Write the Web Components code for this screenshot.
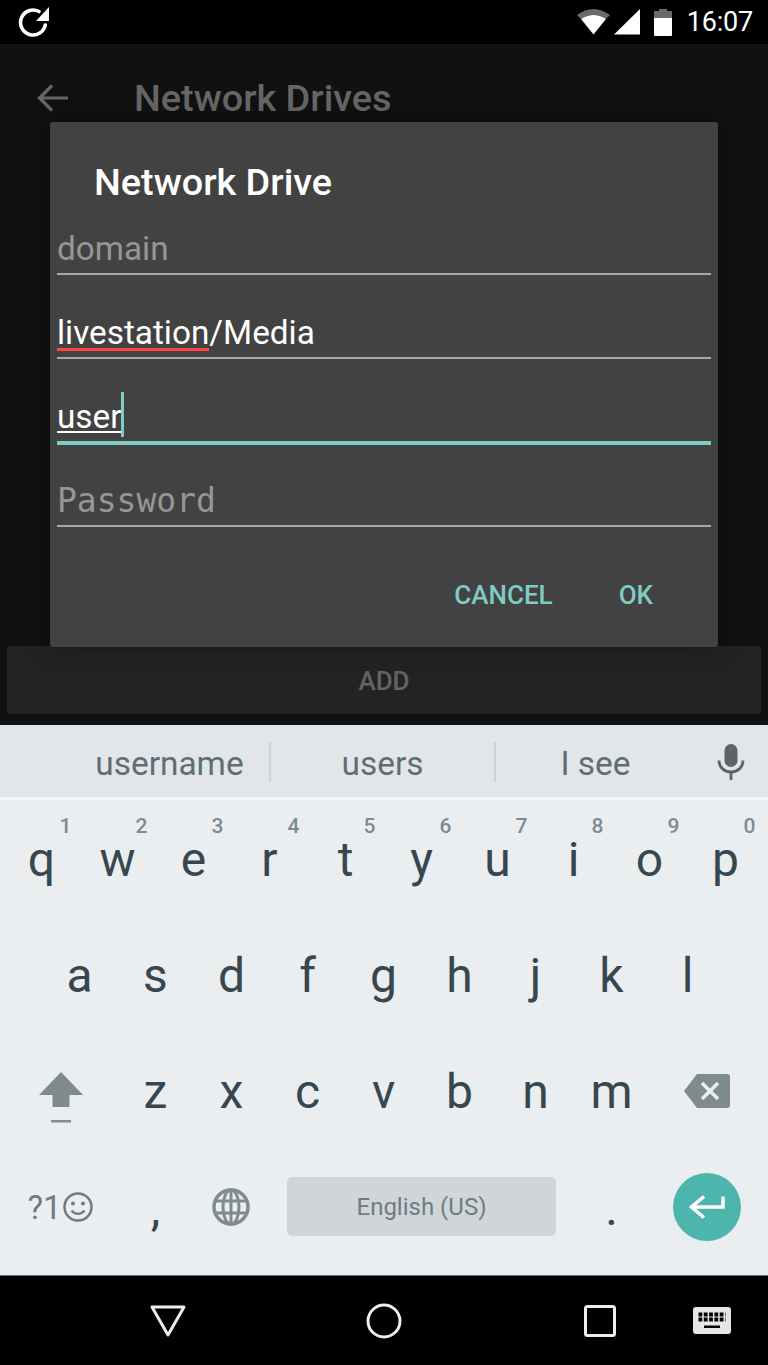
<!DOCTYPE html>
<html>
<head>
<meta charset="utf-8">
<title>Network Drive</title>
<style>
html,body{margin:0;padding:0;background:#000;}
body{width:768px;height:1365px;overflow:hidden;font-family:Roboto,"Liberation Sans",sans-serif;}
</style>
</head>
<body>
<phone-screen>
  <status-bar></status-bar>
  <drive-page></drive-page>
  <soft-keyboard></soft-keyboard>
  <nav-bar></nav-bar>
</phone-screen>

<script>
class PhoneScreen extends HTMLElement {
    constructor() {
        super();
        this.attachShadow({ mode: "open" });
        this.shadowRoot.innerHTML = `
        <style>
        :host{display:flex;flex-direction:column;width:768px;height:1365px;}
        </style>
        <slot></slot>
        `;
    }
}

class StatusBar extends HTMLElement {
    constructor() {
        super();
        this.attachShadow({ mode: "open" });
        this.shadowRoot.innerHTML = `
        <style>
        :host{display:flex;align-items:center;height:44px;background:#000;color:#fff;flex:none;}
        svg{display:block;flex:none;}
        .sync{margin-left:18px;}
        .right{margin-left:auto;display:flex;align-items:center;}
        .wifi{margin-right:4px;}
        .signal{margin-right:14px;}
        .battery{margin-right:15px;}
        .time{font:400 27px Roboto,sans-serif;margin-right:15px;letter-spacing:-.2px;}
        </style>
        <svg class="sync" width="32" height="36" viewBox="0 0 32 36">
            <path d="M21 7.500A12.500 12.500 0 1 0 27.300 21" fill="none" stroke="#fff" stroke-width="3.600" stroke-linecap="round"/>
            <path d="M18 17H31V3z" fill="#fff"/>
        </svg>
        <div class="right">
            <svg class="wifi" width="33" height="26" viewBox="0 0 33 26">
                <path d="M0 6Q16.500 -6 33 6L29 10Q16.500 2 4 10z" fill="#6a6a6a"/>
                <path d="M4 10Q16.500 2 29 10L16.500 25.500z" fill="#fff"/>
            </svg>
            <svg class="signal" width="26" height="26" viewBox="0 0 26 26"><path d="M0 25.500L26 0V25.500z" fill="#fff"/></svg>
            <svg class="battery" width="18" height="27" viewBox="0 0 18 27">
                <path d="M5 0h8v2h5v9H0V2h5z" fill="#6a6a6a"/>
                <path d="M0 9h18v17a1 1 0 0 1-1 1H1a1 1 0 0 1-1-1z" fill="#fff"/>
            </svg>
            <span class="time">16:07</span>
        </div>
        `;
    }
}

class DrivePage extends HTMLElement {
    constructor() {
        super();
        this.attachShadow({ mode: "open" });
        this.shadowRoot.innerHTML = `
        <style>
        :host{display:flex;flex-direction:column;position:relative;height:681px;background:#111;flex:none;}
        .toolbar{display:flex;align-items:center;height:108px;padding-left:37px;box-sizing:border-box;color:#666;}
        .toolbar svg{display:block;margin-right:65px;}
        .toolbar span{font:500 37.800px Roboto,sans-serif;}
        .add{margin:494px 7px 0;height:68px;padding-top:1px;box-sizing:border-box;background:#232323;border-radius:3px;display:flex;align-items:center;justify-content:center;
            font:500 26px Roboto,sans-serif;color:#636363;}
        network-dialog{position:absolute;left:50px;top:78px;}
        </style>
        <div class="toolbar">
            <svg width="32" height="32" viewBox="0 0 32 32"><path d="M31 16H3M15 3.500L2.500 16 15 28.500" fill="none" stroke="#666" stroke-width="3.200"/></svg>
            <span>Network Drives</span>
        </div>
        <div class="add">ADD</div>
        <network-dialog></network-dialog>
        `;
    }
}

class NetworkDialog extends HTMLElement {
    constructor() {
        super();
        this.attachShadow({ mode: "open" });
        this.shadowRoot.innerHTML = `
        <style>
        :host{display:flex;flex-direction:column;box-sizing:border-box;width:668px;height:525px;background:#424242;border-radius:3px;
            box-shadow:0 0 24px rgba(0,0,0,.35);padding:0 7px;}
        h2{margin:0 0 -15px;padding:36px 0 0 37px;height:84px;box-sizing:border-box;font:500 37.800px/48px Roboto,sans-serif;color:#fff;}
        .actions{display:flex;justify-content:flex-end;margin-top:41px;padding-right:58px;gap:66px;}
        .actions span{font:500 26px/54px Roboto,sans-serif;color:#80cbc4;}
        </style>
        <h2>Network Drive</h2>
        <text-field placeholder="domain"></text-field>
        <text-field value="livestation/Media" spell="livestation"></text-field>
        <text-field value="user" focused></text-field>
        <text-field placeholder="Password" mono></text-field>
        <div class="actions"><span>CANCEL</span><span>OK</span></div>
        `;
    }
}

class TextField extends HTMLElement {
    connectedCallback() {
        const root = this.attachShadow({ mode: "open" });
        const value = this.getAttribute("value");
        const spell = this.getAttribute("spell");
        let inner;
        if (value && spell) {
            inner = `<span class="spell">${spell}</span>${value.slice(spell.length)}`;
        } else if (value) {
            inner = `<span class="compose">${value}</span><i></i>`;
        } else {
            inner = `<span class="hint">${this.getAttribute("placeholder")}</span>`;
        }
        root.innerHTML = `
        <style>
        :host{display:block;height:84px;box-sizing:border-box;border-bottom:2px solid #a9a9a9;
            font:400 33.300px/46px Roboto,sans-serif;color:#fff;}
        :host([focused]){border-bottom-color:#80cbc4;box-shadow:0 2px 0 #80cbc4;}
        .line{display:flex;height:82px;padding-top:35px;box-sizing:border-box;white-space:pre;}
        .hint{color:#969696;}
        :host([mono]) .hint{font:400 33px/46px "DejaVu Sans Mono",monospace;}
        .spell{box-shadow:0 3px 0 #f44;height:38px;}
        .compose{box-shadow:0 2px 0 #fff;height:37px;}
        i{display:block;width:3px;height:45px;background:#80cbc4;margin-top:-2px;}
        </style>
        <div class="line">${inner}</div>
        `;
    }
}

class SoftKeyboard extends HTMLElement {
    constructor() {
        super();
        this.attachShadow({ mode: "open" });
        const row1 = [["q","1"],["w","2"],["e","3"],["r","4"],["t","5"],["y","6"],["u","7"],["i","8"],["o","9"],["p","0"]];
        const key = (c, d) => `<kb-key span="2" hint="${d || ""}">${c}</kb-key>`;
        this.shadowRoot.innerHTML = `
        <style>
        :host{display:block;height:550px;background:#eaeef1;flex:none;overflow:hidden;}
        .strip{display:flex;align-items:center;height:75px;padding-top:2px;box-sizing:border-box;background:#e3e6e8;border-bottom:3px solid #f3f5f6;
            font:400 33.400px Roboto,sans-serif;color:#5f6e76;}
        .strip span{display:flex;align-items:center;justify-content:center;height:40px;padding-top:2px;box-sizing:border-box;}
        .s1{width:271px;padding-left:70px;border-right:2px solid #cdd1d3;}
        .s2{width:225px;border-right:2px solid #cdd1d3;}
        .s3{width:199px;}
        .strip svg{margin-left:22px;}
        .keys{display:grid;grid-template-columns:repeat(20,38px);grid-auto-rows:116px;padding:1px 0 0 3.500px;}
        .space{grid-column:span 8;padding:28px 17.500px 29px;box-sizing:border-box;height:116px;display:flex;}
        .space div{flex:1;height:59px;background:#d0d5d8;border-radius:5px;display:flex;align-items:center;justify-content:center;
            font:400 24px Roboto,sans-serif;color:#6f7c83;}
        .gap{grid-column:span 1;}
        .shift{margin-top:13px;}
        .globe{margin-right:2px;}
        </style>
        <div class="strip">
            <span class="s1">username</span><span class="s2">users</span><span class="s3">I see</span>
            <svg width="28" height="38" viewBox="0 0 28 38">
                <rect x="7.500" y="1" width="13" height="23" rx="6.500" fill="#5f6367"/>
                <path d="M2 17.500c0 7 5.500 11.500 12 11.500s12-4.500 12-11.500M14 29v8" fill="none" stroke="#5f6367" stroke-width="2.800"/>
            </svg>
        </div>
        <div class="keys">
            ${row1.map(k => key(k[0], k[1])).join("")}
            <div class="gap"></div>
            ${"asdfghjkl".split("").map(c => key(c)).join("")}
            <div class="gap"></div>
            <kb-key span="3">
                <svg class="shift" width="44" height="52" viewBox="0 0 44 52"><path d="M22 0L44 23H30.500V35H13.500V23H0z" fill="#7f8b8f"/><rect x="12" y="48" width="20" height="2.500" fill="#7f8b8f"/></svg>
            </kb-key>
            ${"zxcvbnm".split("").map(c => key(c)).join("")}
            <kb-key span="3">
                <svg width="46" height="34" viewBox="0 0 46 34"><path d="M13 0H43a3 3 0 0 1 3 3V31a3 3 0 0 1-3 3H13L0 17z" fill="#7f8b8f"/><path d="M18 9L34 25M34 9L18 25" stroke="#eaeef1" stroke-width="3.600"/></svg>
            </kb-key>
            <kb-key span="3" small><span>?1<svg width="32" height="32" viewBox="0 0 32 32" style="vertical-align:-4px"><circle cx="16" cy="16" r="13.500" fill="none" stroke="#6f7c83" stroke-width="2.500"/><circle cx="11" cy="12.500" r="2" fill="#6f7c83"/><circle cx="21" cy="12.500" r="2" fill="#6f7c83"/><path d="M9.500 19.500c3.500 4.500 9.500 4.500 13 0" fill="none" stroke="#6f7c83" stroke-width="2.200"/></svg></span></kb-key>
            <kb-key span="2" low>,</kb-key>
            <kb-key span="2">
                <svg class="globe" width="38" height="38" viewBox="0 0 38 38">
                    <circle cx="19" cy="19" r="17" fill="none" stroke="#7f8b8f" stroke-width="3.500"/>
                    <ellipse cx="19" cy="19" rx="8" ry="17" fill="none" stroke="#7f8b8f" stroke-width="3"/>
                    <path d="M19 2V36M3 13H35M3 25H35" stroke="#7f8b8f" stroke-width="3" fill="none"/>
                </svg>
            </kb-key>
            <div class="space"><div>English (US)</div></div>
            <kb-key span="2" low>.</kb-key>
            <kb-key span="3"><enter-button></enter-button></kb-key>
        </div>
        `;
    }
}

class KbKey extends HTMLElement {
    connectedCallback() {
        const root = this.attachShadow({ mode: "open" });
        const hint = this.getAttribute("hint");
        root.innerHTML = `
        <style>
        :host{display:flex;align-items:center;justify-content:center;position:relative;height:116px;
            font:400 48px Roboto,sans-serif;color:#37474f;grid-column:span ${this.getAttribute("span") || 2};}
        :host([small]){font-size:33px;color:#6f7c83;}
        :host([low]) slot{display:block;transform:translateY(1px);}
        b{position:absolute;left:50%;top:13px;margin-left:18px;font:500 21px/24px Roboto,sans-serif;color:#7d8a91;}
        </style>
        <slot></slot>${hint ? `<b>${hint}</b>` : ""}
        `;
    }
}

class EnterButton extends HTMLElement {
    constructor() {
        super();
        this.attachShadow({ mode: "open" });
        this.shadowRoot.innerHTML = `
        <style>
        :host{display:flex;align-items:center;justify-content:center;width:68px;height:68px;border-radius:50%;background:#4db6ac;}
        svg{display:block;}
        </style>
        <svg width="36" height="24" viewBox="0 0 36 24"><path d="M34 1.500V12H3M15 1.500L2.500 12 15 22.500" fill="none" stroke="#fff" stroke-width="3.500"/></svg>
        `;
    }
}

class NavBar extends HTMLElement {
    constructor() {
        super();
        this.attachShadow({ mode: "open" });
        this.shadowRoot.innerHTML = `
        <style>
        :host{display:flex;align-items:center;height:90px;background:#000;flex:none;border-top:1px solid #6d6d6d;box-sizing:border-box;}
        div{flex:none;display:flex;justify-content:center;align-items:center;}
        svg{display:block;}
        </style>
        <div style="width:336px"><svg width="36" height="32" viewBox="0 0 36 32"><path d="M2 2H34L18 30z" fill="none" stroke="#eee" stroke-width="3" stroke-linejoin="round"/></svg></div>
        <div style="width:96px"><svg width="36" height="36" viewBox="0 0 36 36"><circle cx="18" cy="18" r="16" fill="none" stroke="#eee" stroke-width="3"/></svg></div>
        <div style="width:216px;justify-content:flex-end"><svg width="32" height="32" viewBox="0 0 32 32" style="margin-right:32px"><rect x="1.500" y="1.500" width="29" height="29" rx="2" fill="none" stroke="#eee" stroke-width="3"/></svg></div>
        <div style="width:120px;justify-content:flex-start;padding-left:45px;box-sizing:border-box"><svg width="38" height="27" viewBox="0 0 38 27">
            <rect width="38" height="27" rx="3" fill="#e6e6e6"/>
            <path d="M5.500 7.500h27M5.500 12.500h27" stroke="#000" stroke-width="4" stroke-dasharray="3.800 1.500" fill="none"/>
            <rect x="11" y="18.500" width="16" height="2.500" fill="#000"/>
        </svg></div>
        `;
    }
}

customElements.define('phone-screen', PhoneScreen);
customElements.define('status-bar', StatusBar);
customElements.define('drive-page', DrivePage);
customElements.define('network-dialog', NetworkDialog);
customElements.define('text-field', TextField);
customElements.define('soft-keyboard', SoftKeyboard);
customElements.define('kb-key', KbKey);
customElements.define('enter-button', EnterButton);
customElements.define('nav-bar', NavBar);
</script>
</body>
</html>
